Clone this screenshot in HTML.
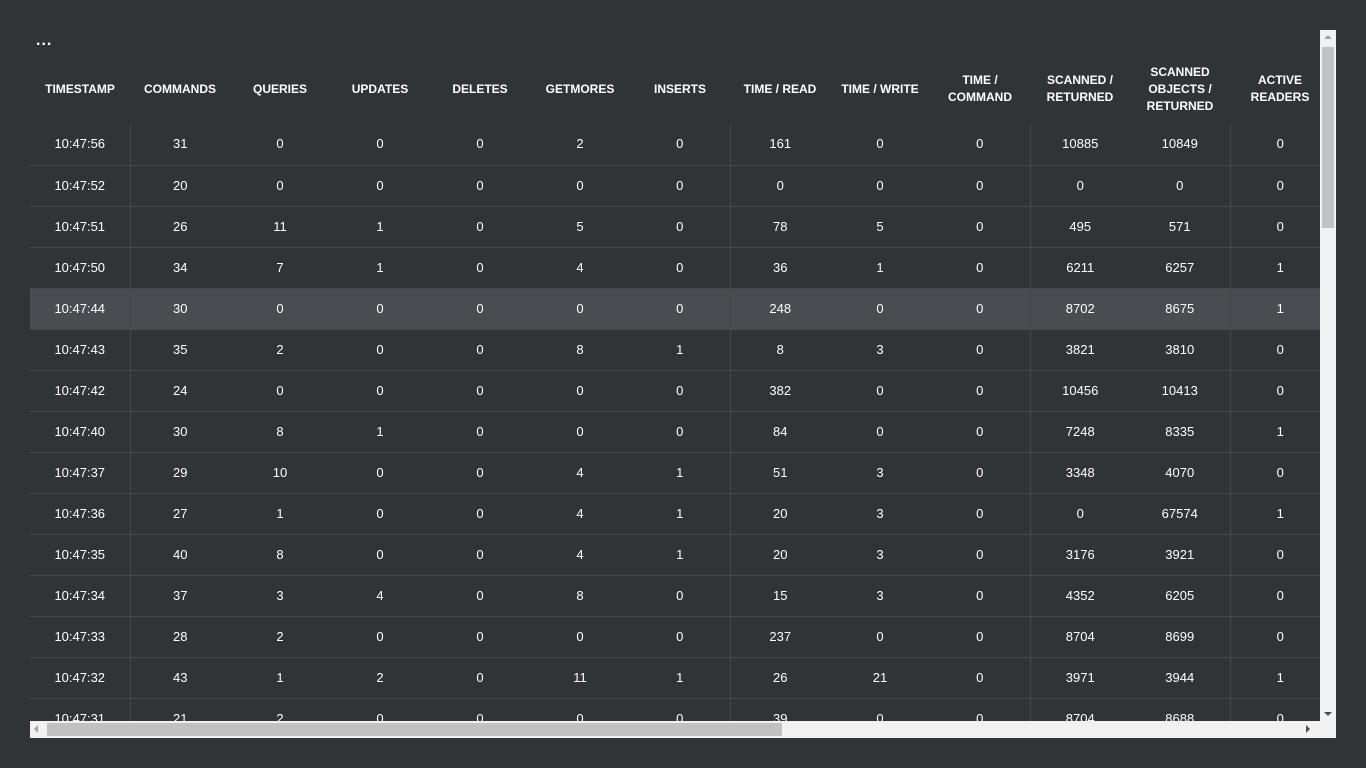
<!DOCTYPE html>
<html><head><meta charset="utf-8"><style>
*{margin:0;padding:0;box-sizing:border-box}
body{width:1366px;height:768px;background:#313435;overflow:hidden;font-family:"Liberation Sans",Arial,sans-serif;color:#fff;position:relative}
.dots{position:absolute;left:36px;top:32px;font-size:16px;font-weight:bold;letter-spacing:1px}
.wrap{position:absolute;left:30px;top:54px;width:1290px;height:667px;overflow:hidden}
table{border-collapse:collapse;table-layout:fixed;width:1300px}
th{width:100px;height:70px;font-size:12px;font-weight:bold;line-height:17px;text-align:center;vertical-align:middle}
td{width:100px;height:41px;font-size:13px;text-align:center;border-bottom:1px solid #45494b;padding:0;line-height:40px}
td.s{border-right:1px solid #45494b}
tr.h td{background:#494d51}
.vs{position:absolute;left:1320px;top:30px;width:16px;height:691px;background:#f1f1f1}
.vs .t{position:absolute;left:2px;top:17px;width:12px;height:181px;background:#c1c1c1}
.hs{position:absolute;left:30px;top:721px;width:1306px;height:17px;background:#f1f1f1}
.hs .t{position:absolute;left:17px;top:2px;width:735px;height:13px;background:#c1c1c1}
.au{position:absolute;left:4px;top:5px;border:4px solid transparent;border-bottom:4px solid #a3a3a3;border-top:0}
.ad{position:absolute;left:4px;bottom:5px;border:4px solid transparent;border-top:4px solid #505050;border-bottom:0}
.al{position:absolute;left:4px;top:4px;border:4px solid transparent;border-right:4px solid #a3a3a3;border-left:0}
.ar{position:absolute;left:1276px;top:4px;border:4px solid transparent;border-left:4px solid #505050;border-right:0}
</style></head><body>
<div class="dots">...</div>
<div class="wrap"><table>
<tr><th>TIMESTAMP</th><th>COMMANDS</th><th>QUERIES</th><th>UPDATES</th><th>DELETES</th><th>GETMORES</th><th>INSERTS</th><th>TIME / READ</th><th>TIME / WRITE</th><th>TIME /<br>COMMAND</th><th>SCANNED /<br>RETURNED</th><th>SCANNED<br>OBJECTS /<br>RETURNED</th><th>ACTIVE<br>READERS</th></tr>
<tr><td class="s">10:47:56</td><td>31</td><td>0</td><td>0</td><td>0</td><td>2</td><td class="s">0</td><td>161</td><td>0</td><td class="s">0</td><td>10885</td><td class="s">10849</td><td>0</td></tr>
<tr><td class="s">10:47:52</td><td>20</td><td>0</td><td>0</td><td>0</td><td>0</td><td class="s">0</td><td>0</td><td>0</td><td class="s">0</td><td>0</td><td class="s">0</td><td>0</td></tr>
<tr><td class="s">10:47:51</td><td>26</td><td>11</td><td>1</td><td>0</td><td>5</td><td class="s">0</td><td>78</td><td>5</td><td class="s">0</td><td>495</td><td class="s">571</td><td>0</td></tr>
<tr><td class="s">10:47:50</td><td>34</td><td>7</td><td>1</td><td>0</td><td>4</td><td class="s">0</td><td>36</td><td>1</td><td class="s">0</td><td>6211</td><td class="s">6257</td><td>1</td></tr>
<tr class="h"><td class="s">10:47:44</td><td>30</td><td>0</td><td>0</td><td>0</td><td>0</td><td class="s">0</td><td>248</td><td>0</td><td class="s">0</td><td>8702</td><td class="s">8675</td><td>1</td></tr>
<tr><td class="s">10:47:43</td><td>35</td><td>2</td><td>0</td><td>0</td><td>8</td><td class="s">1</td><td>8</td><td>3</td><td class="s">0</td><td>3821</td><td class="s">3810</td><td>0</td></tr>
<tr><td class="s">10:47:42</td><td>24</td><td>0</td><td>0</td><td>0</td><td>0</td><td class="s">0</td><td>382</td><td>0</td><td class="s">0</td><td>10456</td><td class="s">10413</td><td>0</td></tr>
<tr><td class="s">10:47:40</td><td>30</td><td>8</td><td>1</td><td>0</td><td>0</td><td class="s">0</td><td>84</td><td>0</td><td class="s">0</td><td>7248</td><td class="s">8335</td><td>1</td></tr>
<tr><td class="s">10:47:37</td><td>29</td><td>10</td><td>0</td><td>0</td><td>4</td><td class="s">1</td><td>51</td><td>3</td><td class="s">0</td><td>3348</td><td class="s">4070</td><td>0</td></tr>
<tr><td class="s">10:47:36</td><td>27</td><td>1</td><td>0</td><td>0</td><td>4</td><td class="s">1</td><td>20</td><td>3</td><td class="s">0</td><td>0</td><td class="s">67574</td><td>1</td></tr>
<tr><td class="s">10:47:35</td><td>40</td><td>8</td><td>0</td><td>0</td><td>4</td><td class="s">1</td><td>20</td><td>3</td><td class="s">0</td><td>3176</td><td class="s">3921</td><td>0</td></tr>
<tr><td class="s">10:47:34</td><td>37</td><td>3</td><td>4</td><td>0</td><td>8</td><td class="s">0</td><td>15</td><td>3</td><td class="s">0</td><td>4352</td><td class="s">6205</td><td>0</td></tr>
<tr><td class="s">10:47:33</td><td>28</td><td>2</td><td>0</td><td>0</td><td>0</td><td class="s">0</td><td>237</td><td>0</td><td class="s">0</td><td>8704</td><td class="s">8699</td><td>0</td></tr>
<tr><td class="s">10:47:32</td><td>43</td><td>1</td><td>2</td><td>0</td><td>11</td><td class="s">1</td><td>26</td><td>21</td><td class="s">0</td><td>3971</td><td class="s">3944</td><td>1</td></tr>
<tr><td class="s">10:47:31</td><td>21</td><td>2</td><td>0</td><td>0</td><td>0</td><td class="s">0</td><td>39</td><td>0</td><td class="s">0</td><td>8704</td><td class="s">8688</td><td>0</td></tr>
</table></div>
<div class="vs"><div class="au"></div><div class="t"></div><div class="ad"></div></div>
<div class="hs"><div class="al"></div><div class="t"></div><div class="ar"></div></div>
</body></html>
